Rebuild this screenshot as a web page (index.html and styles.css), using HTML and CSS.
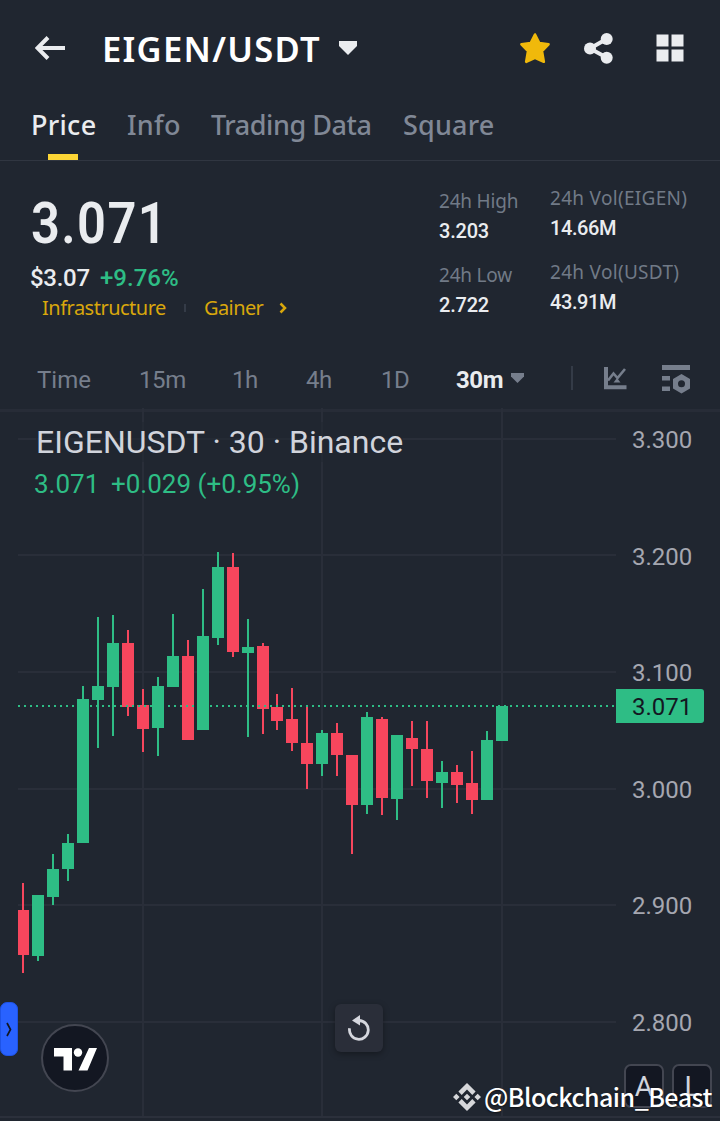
FILE: index.html
```html
<!DOCTYPE html>
<html lang="en">
<head>
<meta charset="utf-8">
<title>EIGEN/USDT</title>
<link rel="stylesheet" href="styles.css">
</head>
<body>
<div class="app">
  <header class="header">
    <svg class="back" width="30" height="24" viewBox="0 0 30 24"><path d="M30 12H4M13 1.500 2.500 12 13 22.500" fill="none" stroke="#eaecef" stroke-width="4"/></svg>
    <h1 class="pair">EIGEN/USDT</h1>
    <svg class="caret" width="18" height="14" viewBox="0 0 18 14"><path d="M0 0h18v5L9 14 0 5z" fill="#eaecef"/></svg>
    <div class="actions">
      <svg width="30" height="31" viewBox="0 0 30 31"><path d="M15 1.500 19.300 10 28.500 11.300 22 18.200 23.800 28.800 15 24.700 6.200 28.800 8 18.200 1.500 11.300 10.700 10z" fill="#f0b90b" stroke="#f0b90b" stroke-width="2.600" stroke-linejoin="round"/></svg>
      <svg width="29" height="31" viewBox="0 0 29 31"><path d="M22.500 6 6 15.500l16.500 9" fill="none" stroke="#eaecef" stroke-width="4"/><circle cx="22.700" cy="6" r="6" fill="#eaecef"/><circle cx="6" cy="15.500" r="6" fill="#eaecef"/><circle cx="22.700" cy="24.700" r="6" fill="#eaecef"/></svg>
      <svg width="28" height="28" viewBox="0 0 28 28"><path d="M.5.5h12v12H.5zM15.500.5h12v12h-12zM.5 15.500h12v12H.5zM15.500 15.500h12v12h-12z" fill="#eaecef"/></svg>
    </div>
  </header>

  <nav class="tabs">
    <a class="tab tab-price active">Price</a>
    <a class="tab tab-info">Info</a>
    <a class="tab tab-data">Trading Data</a>
    <a class="tab tab-square">Square</a>
  </nav>

  <section class="summary">
    <div class="quote">
      <div class="last">3.071</div>
      <div class="change"><span class="fiat">$3.07</span><span class="pct">+9.76%</span></div>
      <div class="tags">
        <span class="tag-infra">Infrastructure</span><i class="tag-sep"></i><span class="tag-gain">Gainer</span>
        <svg width="8" height="12" viewBox="0 0 8 12"><path d="M1.500 1.500 6 6l-4.500 4.500" fill="none" stroke="#d9a70c" stroke-width="2.500"/></svg>
      </div>
    </div>
    <dl class="stats stats-range">
      <dt>24h High</dt><dd>3.203</dd>
      <dt>24h Low</dt><dd>2.722</dd>
    </dl>
    <dl class="stats stats-volume">
      <dt>24h Vol(EIGEN)</dt><dd>14.66M</dd>
      <dt>24h Vol(USDT)</dt><dd>43.91M</dd>
    </dl>
  </section>

  <nav class="intervals">
    <span class="iv iv-time">Time</span>
    <span class="iv iv-15">15m</span>
    <span class="iv iv-1h">1h</span>
    <span class="iv iv-4h">4h</span>
    <span class="iv iv-1d">1D</span>
    <span class="iv iv-30 active">30m</span>
    <svg class="iv-caret" width="13" height="10" viewBox="0 0 13 10"><path d="M0 0h13v3.500L6.500 10 0 3.500z" fill="#767e8c"/></svg>
    <i class="iv-sep"></i>
    <svg class="iv-chart" width="23" height="23" viewBox="0 0 23 23"><path d="M2 0v20.300h20.500" fill="none" stroke="#767e8c" stroke-width="4"/><path d="M4 13.500 9.500 6.500l4 4.500L21 2" fill="none" stroke="#767e8c" stroke-width="2.600"/><path d="m13 11 3.500 4.500h-7z" fill="#767e8c"/></svg>
    <svg class="iv-settings" width="28" height="29" viewBox="0 0 28 29"><path d="M0 0h28v5H0zM0 11h8v4.500H0zM0 21.500h8V26H0z" fill="#767e8c"/><path fill-rule="evenodd" d="m19.500 9 8.500 5v9.500l-8.500 5-8.500-5V14zm0 6.300a3.500 3.500 0 1 0 0 7 3.500 3.500 0 0 0 0-7z" fill="#767e8c"/></svg>
  </nav>

  <main class="chart">
    <svg class="plot" width="616" height="713" viewBox="0 408 616 713" shape-rendering="crispEdges">
      <path class="grid" d="M18 439H616M18 555H616M18 672H616M18 789H616M18 905H616M18 1022H616M143 408V1117M322 408V1117M502 408V1117"/>
      <path class="wick up" d="M38 895V961M53 854V905M68 834V881M83 686V843M98 617V748M113 615V736M158 677V756M173 614V687M203 589V730M218 552V645M248 619V737M322 730V776M367 712V814M397 735V820M442 761V808M487 731V800"/>
      <path class="wick down" d="M23 883V973M128 630V716M143 689V752M188 640V740M233 553V657M263 643V734M277 694V730M292 688V751M307 706V789M337 723V776M352 755V854M382 717V815M412 721V786M427 721V798M457 765V803M472 751V814"/>
      <path class="body up" d="M38 895V956M53 869V897M68 843V869M83 699V843M98 686V700M113 643V687M158 686V728M173 656V687M203 636V730M218 567V638M248 647V653M322 733V764M367 717V805M397 735V799M442 772V783M487 740V800M502 706V741"/>
      <path class="body down" d="M128 643V707M143 705V729M188 656V740M233 567V652M263 646V709M277 707V721M292 719V743M307 743V764M337 733V755M352 755V805M382 719V798M412 738V749M427 749V781M457 772V785M472 783V800"/>
      <path class="first-body" d="M23.500 910V955"/>
      <path class="last-line" d="M18 706H616"/>
    </svg>
    <div class="axis">
      <span>3.300</span><span>3.200</span><span>3.100</span><span>3.000</span><span>2.900</span><span>2.800</span>
    </div>
    <div class="price-flag">3.071</div>
    <div class="legend">
      <div class="symbol">EIGENUSDT · 30 · Binance</div>
      <div class="delta"><span class="d-price">3.071</span><span class="d-change">+0.029 (+0.95%)</span></div>
    </div>
    <div class="drawer"><svg width="6" height="15" viewBox="0 0 6 15"><path d="M1 1l3.500 6.500L1 14" fill="none" stroke="#131722" stroke-width="1.700"/></svg></div>
    <div class="tv"><svg width="43" height="23" viewBox="0 0 43 23"><path d="M0 0h18v22.500H9.500V8.500H0zM35 0h8L33.500 22.500H24.500z" fill="#fff"/><circle cx="24" cy="4.500" r="4.200" fill="#fff"/></svg></div>
    <button class="reset"><svg width="24" height="26" viewBox="0 0 24 26"><path d="M2.600 13.300A9.400 9.400 0 1 0 12 5.500" fill="none" stroke="#d5d7de" stroke-width="2.800"/><path d="M5 5.600 13 0v10.500z" fill="#d5d7de"/></svg></button>
    <div class="scale"><button>A</button><button>L</button></div>
    <i class="time-axis"></i>
    <div class="watermark">
      <svg width="28" height="28" viewBox="0 0 28 28"><path d="M14 0 22.600 8.600l-3.300 3.300L14 6.600l-5.300 5.300-3.300-3.300zM14 28 5.400 19.400l3.300-3.300L14 21.400l5.300-5.300 3.300 3.300zM14 10.700l3.300 3.300-3.300 3.300-3.300-3.300zM3.300 10.700 6.600 14l-3.300 3.300L0 14zM24.700 10.700 28 14l-3.300 3.300-3.300-3.300z" fill="#d6d7da"/></svg>
      <span>@Blockchain_Beast</span>
    </div>
  </main>
</div>
</body>
</html>
```
FILE: styles.css
```css
* { box-sizing: border-box; }
body { margin: 0; background: #202630; color: #eaecef; font-family: "Noto Sans", sans-serif; }
svg { display: block; flex: none; }
.app { width: 720px; height: 1121px; display: flex; flex-direction: column; overflow: hidden; white-space: nowrap; }

.header { height: 98px; display: flex; align-items: center; padding: 0 36px 2px 35px; }
.pair { margin: 2px 0 0 37px; width: 237px; font-size: 34.500px; line-height: 48px; font-weight: 650; color: #fff; letter-spacing: 1.300px; }
.caret { margin-top: -1px; }
.actions { margin-left: auto; display: flex; align-items: center; }
.actions svg:nth-child(2) { margin-left: 34px; }
.actions svg:nth-child(3) { margin-left: 43px; }

.tabs { height: 63px; display: flex; padding-left: 31px; border-bottom: 1px solid #303641; font-size: 27px; font-weight: 500; line-height: 53px; color: #808896; }
.tab { position: relative; }
.tab.active { color: #eaecef; }
.tab.active::after { content: ""; position: absolute; left: 17px; top: 56px; width: 30px; height: 6px; background: #fcd535; }
.tab-price { width: 96px; letter-spacing: .3px; }
.tab-info { width: 84px; letter-spacing: .3px; }
.tab-data { width: 192px; letter-spacing: -.45px; }
.tab-square { letter-spacing: .2px; }

.summary { height: 186px; display: flex; padding-left: 31px; }
.quote { width: 408px; padding-top: 30px; }
.last { font: 600 57px/66px Roboto, sans-serif; letter-spacing: 1.500px; transform: scaleX(.89); transform-origin: left; }
.change { margin-top: 7px; display: flex; font: 500 24px/28px Roboto, sans-serif; }
.fiat { width: 69px; margin-left: -1px; letter-spacing: -.3px; }
.pct { margin-left: 1px; color: #2ebd85; }
.tags { display: flex; align-items: center; padding-left: 11px; margin-top: 2px; font-size: 20px; line-height: 28px; color: #d9a70c; }
.tag-infra { width: 142px; letter-spacing: -.5px; }
.tag-sep { width: 2px; height: 8px; background: #343b47; margin-right: 18px; }
.tag-gain { width: 75px; letter-spacing: -.6px; }
.stats { margin: 0; width: 111px; padding-top: 26px; }
.stats-volume { padding-top: 23px; }
.stats dt { font-size: 19px; line-height: 28px; color: #717a87; letter-spacing: -.2px; }
.stats-volume dt { letter-spacing: .3px; }
.stats dd { margin: 0 0 13px; font: 500 20px/33px Roboto, sans-serif; letter-spacing: -.2px; }
.stats-volume dd { letter-spacing: -.4px; }

.intervals { height: 61px; display: flex; align-items: center; padding: 4px 30px 0 37px; font: 400 24px/36px Roboto, sans-serif; color: #767e8c; }
.iv { letter-spacing: -.4px; }
.iv.active { color: #eaecef; font-weight: 700; }
.iv-time { width: 102px; letter-spacing: 0; }
.iv-15 { width: 93px; }
.iv-1h { width: 74px; }
.iv-4h { width: 75px; }
.iv-1d { width: 75px; }
.iv-30 { width: 55px; }
.iv-caret { margin-top: -4px; }
.iv-sep { width: 2px; height: 24px; margin: -3px 0 0 47px; background: #343b47; }
.iv-chart { margin: -3px 0 0 31px; }
.iv-settings { margin-left: auto; }

.chart { position: relative; height: 713px; display: flex; font-family: Roboto, sans-serif; }
.chart::before { content: ""; position: absolute; left: 0; right: 0; top: 1px; height: 3px; background: #272c37; }
.plot { position: relative; }
.grid { stroke: #292e39; stroke-width: 2; fill: none; }
.wick { stroke-width: 2; fill: none; }
.body { stroke-width: 12; fill: none; }
.up { stroke: #2ebd85; }
.down { stroke: #f6465d; }
.first-body { stroke: #f6465d; stroke-width: 11; }
.last-line { stroke: #2ebd85; stroke-width: 2; stroke-dasharray: 2 4; }
.axis { padding: 14px 0 0 16px; display: flex; flex-direction: column; gap: 80.500px; font-size: 24px; line-height: 36px; color: #a5a7b0; }
.price-flag { position: absolute; left: 616px; top: 281px; width: 88px; height: 34px; padding-left: 16px; border-radius: 0 3px 3px 0; background: #2ebd85; color: #131722; font-size: 24px; line-height: 36px; }
.legend { position: absolute; left: 36px; top: 14px; }
.symbol { font-size: 32px; line-height: 40px; color: #d1d4dc; background: rgba(32,38,48,.5); }
.delta { display: flex; margin: 3px 0 0 -2px; font-size: 26px; line-height: 38px; color: #2ebd85; }
.d-price { width: 77px; }
.drawer { position: absolute; left: 0; top: 594px; width: 18px; height: 54px; border-radius: 7px; border: 1px solid #1e53e5; background: #2962ff; display: grid; place-items: center; }
.tv { position: absolute; left: 41px; top: 616px; width: 68px; height: 68px; border-radius: 50%; border: 2px solid #434651; background: #131722; display: grid; place-items: center; padding-top: 3px; }
button { padding: 0; border: 0; font-family: inherit; }
.reset { position: absolute; left: 335px; top: 596px; width: 48px; height: 48px; border-radius: 6px; background: #2a2e39; box-shadow: 0 2px 6px rgba(0,0,0,.35); display: grid; place-items: center; }
.scale { position: absolute; left: 624px; top: 656px; display: flex; gap: 8px; }
.scale button { width: 40px; height: 44px; border: 2px solid #434651; border-radius: 7px; background: #131722; color: #d1d4dc; font-size: 28px; line-height: 39px; }
.time-axis { position: absolute; left: 0; right: 0; top: 708px; height: 2px; background: #2b303b; }
.watermark { position: absolute; left: 453px; top: 671px; display: flex; align-items: center; gap: 3px; font: 500 25px/38px "Noto Sans CJK SC", sans-serif; color: #fff; text-shadow: 0 1px 2px rgba(0,0,0,.6); }
.watermark span { margin-top: -2px; letter-spacing: -.5px; }
```
